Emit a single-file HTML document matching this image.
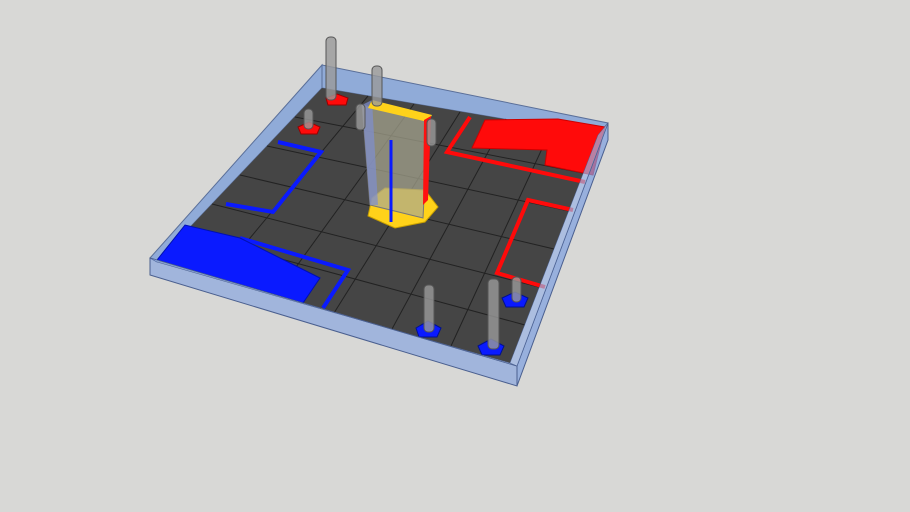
<!DOCTYPE html>
<html><head><meta charset="utf-8"><style>
html,body{margin:0;padding:0;background:#d8d8d6;width:910px;height:512px;overflow:hidden}
</style></head><body>
<svg width="910" height="512" viewBox="0 0 910 512" xmlns="http://www.w3.org/2000/svg">
<rect width="910" height="512" fill="#d8d8d6"/>
<!-- back walls -->
<polygon points="150,258 322,65 322,88 157,262" fill="#90abd8" stroke="#5a6f99" stroke-width="1"/>
<polygon points="322,65 608,123 598,135 322,88" fill="#90abd8" stroke="#5a6f99" stroke-width="1"/>
<!-- floor -->
<polygon points="322,88 598,135 510,363 157,262" fill="#454545"/>
<g stroke="#222" stroke-width="1">
<line x1="368" y1="96" x2="216" y2="279"/><line x1="414" y1="104" x2="275" y2="296"/>
<line x1="460" y1="112" x2="334" y2="313"/><line x1="506" y1="119" x2="392" y2="329"/>
<line x1="552" y1="127" x2="451" y2="346"/>
<line x1="295" y1="117" x2="583" y2="173"/><line x1="267" y1="146" x2="569" y2="211"/>
<line x1="240" y1="175" x2="554" y2="249"/><line x1="212" y1="204" x2="539" y2="287"/>
<line x1="185" y1="233" x2="525" y2="325"/>
</g>
<!-- red ramp and lines -->
<polygon points="485,120 558,119 605,127 593,175 545,165 547,150 472,148" fill="#ff0a0a" stroke="#c00" stroke-width="1"/>
<polyline points="470,117 447,152 585,182" fill="none" stroke="#ff0a0a" stroke-width="4"/>
<polyline points="573,210 528,200 497,273 545,287" fill="none" stroke="#ff0a0a" stroke-width="4"/>
<!-- blue lines and ramp -->
<polyline points="278,142 321,152 273,212 226,204" fill="none" stroke="#0a1aff" stroke-width="4"/>
<polyline points="240,238 348,270 323,308" fill="none" stroke="#0a1aff" stroke-width="4"/>
<polygon points="157,260 185,225 240,238 320,278 303,303" fill="#0a1aff" stroke="#0010b0" stroke-width="1"/>
<!-- center tower -->
<polygon points="372,198 385,188 425,190 438,207 425,222 395,228 368,216" fill="#ffd21a" stroke="#c9a000"/>
<polygon points="362,105 428,120 423,218 370,205" fill="#a9a892" fill-opacity="0.7" stroke="#777" stroke-width="1"/>
<polygon points="362,105 372,100 378,205 370,205" fill="#7f8fd0" fill-opacity="0.7"/>
<polygon points="368,108 372,100 432,115 428,122" fill="#ffd21a"/>
<polygon points="424,120 431,116 428,200 423,205" fill="#ff1010"/>
<line x1="391" y1="140" x2="391" y2="222" stroke="#0a1aff" stroke-width="3"/>
<!-- red hex bases -->
<polygon points="326,98 337,94 348,98 346,105 328,105" fill="#ff0a0a" stroke="#900"/>
<polygon points="298,127 309,122 320,127 317,134 301,134" fill="#ff0a0a" stroke="#900"/>
<!-- blue hex bases -->
<polygon points="416,328 428,321 441,328 437,337 419,337" fill="#0a1aff" stroke="#001090"/>
<polygon points="478,346 491,339 504,346 500,355 482,355" fill="#0a1aff" stroke="#001090"/>
<polygon points="502,298 515,292 528,298 524,307 506,307" fill="#0a1aff" stroke="#001090"/>
<!-- poles -->
<g fill="#9a9a9a" fill-opacity="0.8" stroke="#555" stroke-width="1">
<rect x="326" y="37" width="10" height="63" rx="4"/>
<rect x="372" y="66" width="10" height="40" rx="4"/>
<rect x="304" y="109" width="9" height="20" rx="4"/>
<rect x="356" y="104" width="9" height="26" rx="4"/>
<rect x="427" y="119" width="9" height="27" rx="4"/>
<rect x="424" y="285" width="10" height="47" rx="4"/>
<rect x="488" y="279" width="11" height="70" rx="4"/>
<rect x="512" y="277" width="9" height="25" rx="4"/>
</g>
<!-- front walls -->
<polygon points="150,258 517,366 517,386 150,275" fill="#7d9fe0" fill-opacity="0.6" stroke="#4a5f8f" stroke-width="1"/>
<polygon points="517,366 608,123 608,140 517,386" fill="#7d9fe0" fill-opacity="0.7" stroke="#4a5f8f" stroke-width="1"/>
<polygon points="150,258 157,262 510,363 517,366" fill="#9ab4e4" fill-opacity="0.7" stroke="#4a5f8f" stroke-width="0.5"/>
<polygon points="598,135 608,123 517,366 510,363" fill="#9ab4e4" fill-opacity="0.7" stroke="#4a5f8f" stroke-width="0.5"/>
</svg>
</body></html>
